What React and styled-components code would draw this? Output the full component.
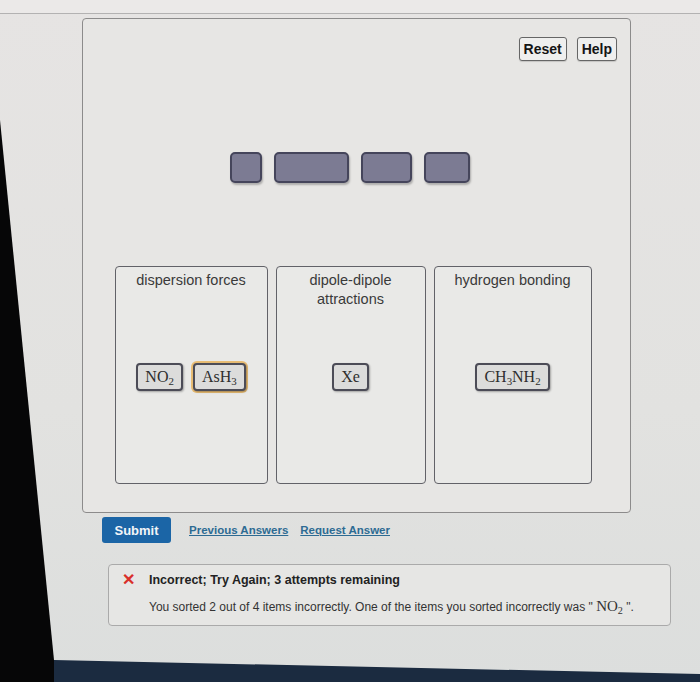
import React from "react";
import styled, { createGlobalStyle } from "styled-components";

const Global = createGlobalStyle`
  html, body { margin: 0; padding: 0; }
  body { font-family: "Liberation Sans", Arial, sans-serif; }
`;

const Root = styled.div`
  width: 700px;
  height: 682px;
  overflow: hidden;
  background: linear-gradient(90deg, #060607 0 54px, #1b2b40 54px);
`;

const Screen = styled.div`
  width: 700px;
  height: 682px;
  display: flex;
  flex-direction: column;
  background: linear-gradient(180deg, #e6e4e3 0%, #e2e2e0 60%, #dcdedd 100%);
  clip-path: polygon(0 0, 100% 0, 100% 674px, 54px 660px, 28px 400px, 0 120px);
`;

const TopStrip = styled.div`
  height: 13px;
  flex: none;
  background: #ebe9e8;
  border-bottom: 1px solid #b3b2b2;
`;

const Panel = styled.section`
  margin: 4px 0 0 82px;
  width: 549px;
  height: 495px;
  box-sizing: border-box;
  border: 1.5px solid #8c8b8b;
  border-radius: 4px;
  background: #e7e6e4;
  display: flex;
  flex-direction: column;
  padding: 18px 13px 0 0;
`;

const Toolbar = styled.div`
  display: flex;
  justify-content: flex-end;
  gap: 10px;
`;

const ToolButton = styled.button`
  height: 24px;
  padding: 0 4px;
  border: 1px solid #666;
  border-radius: 3px;
  background: #efefee;
  font-family: "Liberation Sans", Arial, sans-serif;
  font-weight: bold;
  font-size: 14px;
  color: #151515;
  box-shadow: 0 1px 1px rgba(0, 0, 0, 0.15);
`;

const TileRow = styled.div`
  margin-top: 91px;
  display: flex;
  justify-content: center;
  gap: 12px;
`;

const Tile = styled.div`
  width: ${(p) => p.$w}px;
  height: 31px;
  box-sizing: border-box;
  border: 2px solid #45455b;
  border-radius: 5px;
  background: #7c7b93;
  box-shadow: 1px 2px 2px rgba(0, 0, 0, 0.25);
`;

const BinRow = styled.div`
  margin-top: 83px;
  display: flex;
  justify-content: center;
  gap: 8px;
  padding-left: 6px;
`;

const Bin = styled.div`
  width: ${(p) => p.$w}px;
  height: 218px;
  box-sizing: border-box;
  border: 1.5px solid #626268;
  border-radius: 4px;
  background: #e9e9e7;
  display: grid;
  grid-template-rows: 1fr auto 1fr;
`;

const BinTitle = styled.div`
  align-self: start;
  padding-top: 4px;
  text-align: center;
  font-size: 14.5px;
  line-height: 19px;
  color: #3a3a3a;
`;

const ItemRow = styled.div`
  display: flex;
  justify-content: center;
  gap: 10px;
  padding-top: 4px;
`;

const Item = styled.div`
  height: 28px;
  box-sizing: border-box;
  padding: 0 7px;
  display: flex;
  align-items: center;
  border: 2px solid #4c4c57;
  border-radius: 4px;
  background: #dcdcdb;
  box-shadow: 1px 1px 2px rgba(0, 0, 0, 0.3)${(p) => (p.$hl ? ", 0 0 0 2px #e9bd74" : "")};
  color: #2e2e2e;
  white-space: nowrap;
`;

const Chem = styled.span`
  font-family: "Liberation Serif", "Times New Roman", serif;
  font-size: ${(p) => p.$size || 16}px;
  line-height: 1;
  sub {
    font-size: 0.68em;
    position: relative;
    top: 0.28em;
    vertical-align: baseline;
    line-height: 0;
  }
`;

const Actions = styled.div`
  margin: 4px 0 0 102px;
  display: flex;
  align-items: center;
  gap: 12px;
`;

const Submit = styled.button`
  width: 69px;
  height: 26px;
  border: none;
  border-radius: 3px;
  background: #1b65a6;
  color: #f2f5f8;
  font-family: "Liberation Sans", Arial, sans-serif;
  font-weight: bold;
  font-size: 13px;
  margin-right: 6px;
`;

const LinkText = styled.a`
  font-weight: bold;
  font-size: 11.5px;
  color: #2d6b93;
  text-decoration: underline;
  cursor: pointer;
`;

const Feedback = styled.div`
  margin: 21px 0 0 108px;
  width: 563px;
  height: 62px;
  box-sizing: border-box;
  border: 1px solid #aaaaaa;
  border-radius: 4px;
  background: #e6e6e4;
  padding: 5px 0 0 13px;
  display: grid;
  grid-template-columns: 27px 1fr;
  align-content: start;
  row-gap: 7px;
  align-items: center;
`;

const Cross = styled.span`
  color: #d9302a;
  font-weight: bold;
  font-size: 16px;
  line-height: 20px;
`;

const FeedTitle = styled.div`
  font-weight: bold;
  font-size: 12.5px;
  color: #222;
  line-height: 20px;
`;

const FeedText = styled.div`
  grid-column: 2;
  font-size: 12px;
  color: #333;
  line-height: 20px;
`;

export default function App() {
  return (
    <Root>
      <Global />
      <Screen>
        <TopStrip />
        <Panel>
          <Toolbar>
            <ToolButton>Reset</ToolButton>
            <ToolButton>Help</ToolButton>
          </Toolbar>
          <TileRow>
            <Tile $w={32} />
            <Tile $w={75} />
            <Tile $w={51} />
            <Tile $w={46} />
          </TileRow>
          <BinRow>
            <Bin $w={153}>
              <BinTitle>dispersion forces</BinTitle>
              <ItemRow>
                <Item><Chem>NO<sub>2</sub></Chem></Item>
                <Item $hl><Chem>AsH<sub>3</sub></Chem></Item>
              </ItemRow>
            </Bin>
            <Bin $w={150}>
              <BinTitle>dipole-dipole<br />attractions</BinTitle>
              <ItemRow>
                <Item><Chem>Xe</Chem></Item>
              </ItemRow>
            </Bin>
            <Bin $w={158}>
              <BinTitle>hydrogen bonding</BinTitle>
              <ItemRow>
                <Item><Chem>CH<sub>3</sub>NH<sub>2</sub></Chem></Item>
              </ItemRow>
            </Bin>
          </BinRow>
        </Panel>
        <Actions>
          <Submit>Submit</Submit>
          <LinkText>Previous Answers</LinkText>
          <LinkText>Request Answer</LinkText>
        </Actions>
        <Feedback>
          <Cross>✕</Cross>
          <FeedTitle>Incorrect; Try Again; 3 attempts remaining</FeedTitle>
          <FeedText>
            You sorted 2 out of 4 items incorrectly. One of the items you sorted incorrectly was "{" "}
            <Chem $size={15}>NO<sub>2</sub></Chem> ".
          </FeedText>
        </Feedback>
      </Screen>
    </Root>
  );
}
